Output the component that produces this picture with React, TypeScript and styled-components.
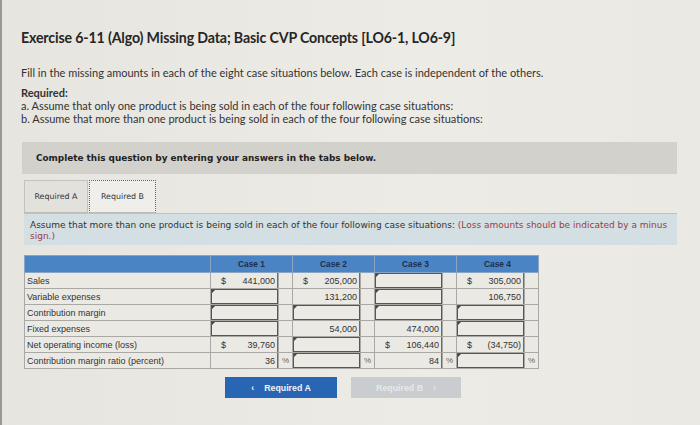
import React from "react";
import styled, { createGlobalStyle } from "styled-components";

const Global = createGlobalStyle`
  html, body { margin: 0; padding: 0; background: #e9e7e1; }
  body { width: 700px; height: 425px; overflow: hidden; }
`;

const Page = styled.div`
  width: 700px;
  height: 425px;
  box-sizing: border-box;
  padding: 29px 25px 0 19px;
  background: linear-gradient(90deg, #e7e5df 0%, #edebe6 60%, #ebe9e4 100%);
  border-left: 2px solid #9a9893;
  font-family: "Lato", "Liberation Sans", sans-serif;
  color: #2a2a2a;
`;

const Title = styled.h1`
  margin: 0;
  font-size: 14.2px;
  font-weight: 700;
  letter-spacing: -0.15px;
  color: #262626;
  line-height: 18px;
`;

const Para = styled.p`
  margin: 19px 0 0;
  font-size: 11px;
  line-height: 13px;
  color: #333;
`;

const Req = styled.div`
  margin-top: 7px;
  font-size: 11px;
  line-height: 13px;
  color: #333;
`;

const ReqHead = styled.div`
  font-weight: 700;
  font-size: 11px;
`;

const Inner = styled.div`
  margin-left: 1px;
  margin-top: 17px;
  width: 655px;
  font-family: "DejaVu Sans", Verdana, sans-serif;
`;

const Banner = styled.div`
  height: 32px;
  background: #d3d1cb;
  display: flex;
  align-items: center;
  padding-left: 14px;
  font-size: 8.9px;
  font-weight: 700;
  color: #222;
`;

const TabRow = styled.div`
  display: flex;
  padding: 6px 0 0 2px;
  height: 39px;
  box-sizing: border-box;
`;

const Tab = styled.div<{ $active?: boolean }>`
  width: ${(p) => (p.$active ? "67px" : "64px")};
  height: 33px;
  box-sizing: border-box;
  display: flex;
  align-items: center;
  justify-content: center;
  font-size: 7.9px;
  color: #333;
  background: ${(p) => (p.$active ? "#efeeea" : "#e3e1dc")};
  border: ${(p) => (p.$active ? "1px dotted #666" : "1px solid #c4c2bd")};
  border-bottom: 1px solid #bdbbb6;
  margin-right: 1px;
`;

const Instr = styled.div`
  margin-left: 2px;
  height: 32px;
  box-sizing: border-box;
  background: #d3dfe2;
  border-top: 1px solid #b9c3c6;
  padding: 6px 8px 0 6px;
  font-size: 9px;
  line-height: 11px;
  color: #333;
`;

const Red = styled.span`
  color: #9b3b47;
`;

const Table = styled.table`
  margin: 10px 0 0 2px;
  border-collapse: collapse;
  font-family: "Liberation Sans", Arial, sans-serif;
  font-size: 9px;
  color: #333;
`;

const HeadCell = styled.th<{ $w?: number }>`
  background: #4a84c4;
  color: #1d2f4a;
  font-weight: 700;
  font-size: 8.4px;
  height: 16px;
  padding: 0;
  border: 1px solid #8aa5c4;
  width: ${(p) => (p.$w ? `${p.$w}px` : "auto")};
`;

const LabelCell = styled.td`
  width: 184px;
  height: 15px;
  padding: 0 0 0 2px;
  border: 1px solid #a9a8a4;
  background: #ebe9e4;
  box-sizing: border-box;
`;

const ValCell = styled.td`
  width: 68px;
  padding: 0;
  border: 1px solid #a9a8a4;
  border-right: none;
  background: #ebe9e4;
  box-sizing: border-box;
`;

const PctCell = styled.td`
  width: 13px;
  padding: 0;
  text-align: center;
  border: 1px solid #a9a8a4;
  background: #ebe9e4;
  font-size: 8px;
  color: #666;
`;

const Val = styled.div`
  display: flex;
  justify-content: space-between;
  align-items: center;
  padding: 0 2px 0 10px;
  height: 15px;
  box-sizing: border-box;
  border-right: 1px solid #6d6c68;
`;

const Input = styled.div`
  height: 15px;
  box-sizing: border-box;
  border: 1.5px solid #55565c;
  border-top-width: 1px;
  background: #eceae5;
  position: relative;
  &::before {
    content: "";
    position: absolute;
    left: 0;
    top: 0;
    border-top: 3px solid #444;
    border-right: 3px solid transparent;
  }
`;

const BtnRow = styled.div`
  display: flex;
  gap: 14px;
  margin: 8px 0 0 203px;
`;

const Btn = styled.div<{ $on?: boolean }>`
  width: ${(p) => (p.$on ? "112px" : "110px")};
  height: 21px;
  display: flex;
  align-items: center;
  justify-content: center;
  gap: 10px;
  font-family: "Liberation Sans", Arial, sans-serif;
  font-weight: 700;
  font-size: 8.8px;
  background: ${(p) => (p.$on ? "#2865b2" : "#c9cdd0")};
  color: ${(p) => (p.$on ? "#f2f4f8" : "#e6e8ea")};
`;

type Cell = { d?: boolean; v?: string; input?: boolean; pct?: boolean };

const rows: { label: string; cells: Cell[] }[] = [
  {
    label: "Sales",
    cells: [
      { d: true, v: "441,000" },
      { d: true, v: "205,000" },
      { input: true },
      { d: true, v: "305,000" },
    ],
  },
  {
    label: "Variable expenses",
    cells: [{ input: true }, { v: "131,200" }, { input: true }, { v: "106,750" }],
  },
  {
    label: "Contribution margin",
    cells: [{ input: true }, { input: true }, { input: true }, { input: true }],
  },
  {
    label: "Fixed expenses",
    cells: [{ input: true }, { v: "54,000" }, { v: "474,000" }, { input: true }],
  },
  {
    label: "Net operating income (loss)",
    cells: [
      { d: true, v: "39,760" },
      { input: true },
      { d: true, v: "106,440" },
      { d: true, v: "(34,750)" },
    ],
  },
  {
    label: "Contribution margin ratio (percent)",
    cells: [
      { v: "36", pct: true },
      { input: true, pct: true },
      { v: "84", pct: true },
      { input: true, pct: true },
    ],
  },
];

export default function App() {
  return (
    <>
      <Global />
      <Page>
        <Title>Exercise 6-11 (Algo) Missing Data; Basic CVP Concepts [LO6-1, LO6-9]</Title>
        <Para>
          Fill in the missing amounts in each of the eight case situations below. Each case is
          independent of the others.
        </Para>
        <Req>
          <ReqHead>Required:</ReqHead>
          <div>a. Assume that only one product is being sold in each of the four following case situations:</div>
          <div>b. Assume that more than one product is being sold in each of the four following case situations:</div>
        </Req>
        <Inner>
          <Banner>Complete this question by entering your answers in the tabs below.</Banner>
          <TabRow>
            <Tab>Required A</Tab>
            <Tab $active>Required B</Tab>
          </TabRow>
          <Instr>
            Assume that more than one product is being sold in each of the four following case
            situations: <Red>(Loss amounts should be indicated by a minus</Red>
            <br />
            <Red>sign.)</Red>
          </Instr>
          <Table>
            <thead>
              <tr>
                <HeadCell $w={185} />
                {[1, 2, 3, 4].map((n) => (
                  <HeadCell key={n} colSpan={2} $w={81}>
                    Case {n}
                  </HeadCell>
                ))}
              </tr>
            </thead>
            <tbody>
              {rows.map((r) => (
                <tr key={r.label}>
                  <LabelCell>{r.label}</LabelCell>
                  {r.cells.map((c, i) => (
                    <React.Fragment key={i}>
                      <ValCell>
                        {c.input ? (
                          <Input />
                        ) : (
                          <Val>
                            <span>{c.d ? "$" : ""}</span>
                            <span>{c.v}</span>
                          </Val>
                        )}
                      </ValCell>
                      <PctCell>{c.pct ? "%" : ""}</PctCell>
                    </React.Fragment>
                  ))}
                </tr>
              ))}
            </tbody>
          </Table>
          <BtnRow>
            <Btn $on>
              <span>‹</span>
              <span>Required A</span>
            </Btn>
            <Btn>
              <span>Required B</span>
              <span>›</span>
            </Btn>
          </BtnRow>
        </Inner>
      </Page>
    </>
  );
}
